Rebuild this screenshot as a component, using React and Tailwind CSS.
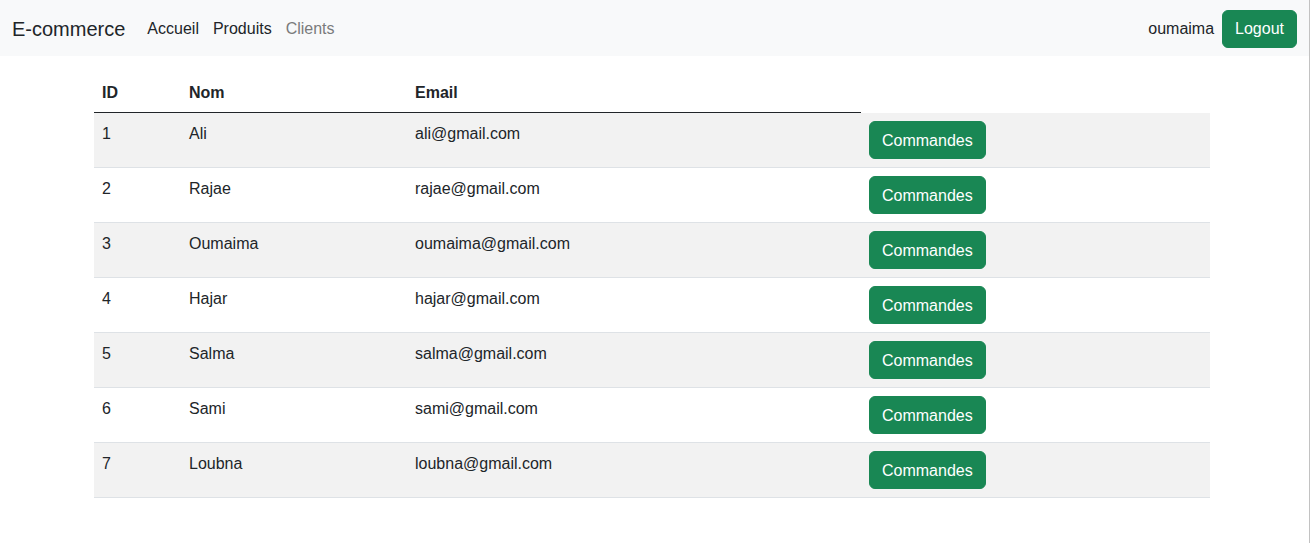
const clients = [
  { id: 1, nom: 'Ali', email: 'ali@gmail.com' },
  { id: 2, nom: 'Rajae', email: 'rajae@gmail.com' },
  { id: 3, nom: 'Oumaima', email: 'oumaima@gmail.com' },
  { id: 4, nom: 'Hajar', email: 'hajar@gmail.com' },
  { id: 5, nom: 'Salma', email: 'salma@gmail.com' },
  { id: 6, nom: 'Sami', email: 'sami@gmail.com' },
  { id: 7, nom: 'Loubna', email: 'loubna@gmail.com' },
];

function Navbar() {
  return (
    <nav className="h-14 bg-[#f8f9fa] px-3 pt-px flex items-center">
      <span className="text-[20px] leading-[30px] text-[#212529] mr-[14px]">E-commerce</span>
      <a className="px-2 text-[#212529]">Accueil</a>
      <a className="px-[6px] text-[#212529]">Produits</a>
      <a className="px-2 text-[#7a7b7c]">Clients</a>
      <div className="ml-auto flex items-center">
        <span className="mr-2 text-[#212529]">oumaima</span>
        <button className="bg-[#198754] border border-[#198754] text-white rounded-md px-3 py-1.5 leading-6">Logout</button>
      </div>
    </nav>
  );
}

export default function App() {
  return (
    <div className="flex min-h-[543px] bg-white text-[16px] leading-6 text-[#212529]" style={{ fontFamily: '"Segoe UI", "Liberation Sans", sans-serif' }}>
      <div className="w-[1310px] shrink-0 border-r border-[#c2c2c2]">
        <Navbar />
        <div className="ml-[94px] w-[1116px] mt-4">
          <div className="grid grid-cols-[87px_226px_454px_349px]">
            {/* ── header ── */}
            <div className="px-2 pt-[9px] pb-[7px] font-bold border-b border-[#212529]">ID</div>
            <div className="px-2 pt-[9px] pb-[7px] font-bold border-b border-[#212529]">Nom</div>
            <div className="px-2 pt-[9px] pb-[7px] font-bold border-b border-[#212529]">Email</div>
            <div />
            {/* ── rows ── */}
            {clients.map((c, i) => (
              <div key={c.id} className="contents">
                <div className={`px-2 pt-[9px] border-b border-[#dee2e6] ${i % 2 === 0 ? 'bg-[#f2f2f2]' : 'bg-white'}`}>{c.id}</div>
                <div className={`px-2 pt-[9px] border-b border-[#dee2e6] ${i % 2 === 0 ? 'bg-[#f2f2f2]' : 'bg-white'}`}>{c.nom}</div>
                <div className={`px-2 pt-[9px] border-b border-[#dee2e6] ${i % 2 === 0 ? 'bg-[#f2f2f2]' : 'bg-white'}`}>{c.email}</div>
                <div className={`p-2 border-b border-[#dee2e6] ${i % 2 === 0 ? 'bg-[#f2f2f2]' : 'bg-white'}`}>
                  <button className="bg-[#198754] border border-[#198754] text-white rounded-md px-3 pt-[7px] pb-[5px] leading-6">Commandes</button>
                </div>
              </div>
            ))}
          </div>
        </div>
      </div>
    </div>
  );
}
